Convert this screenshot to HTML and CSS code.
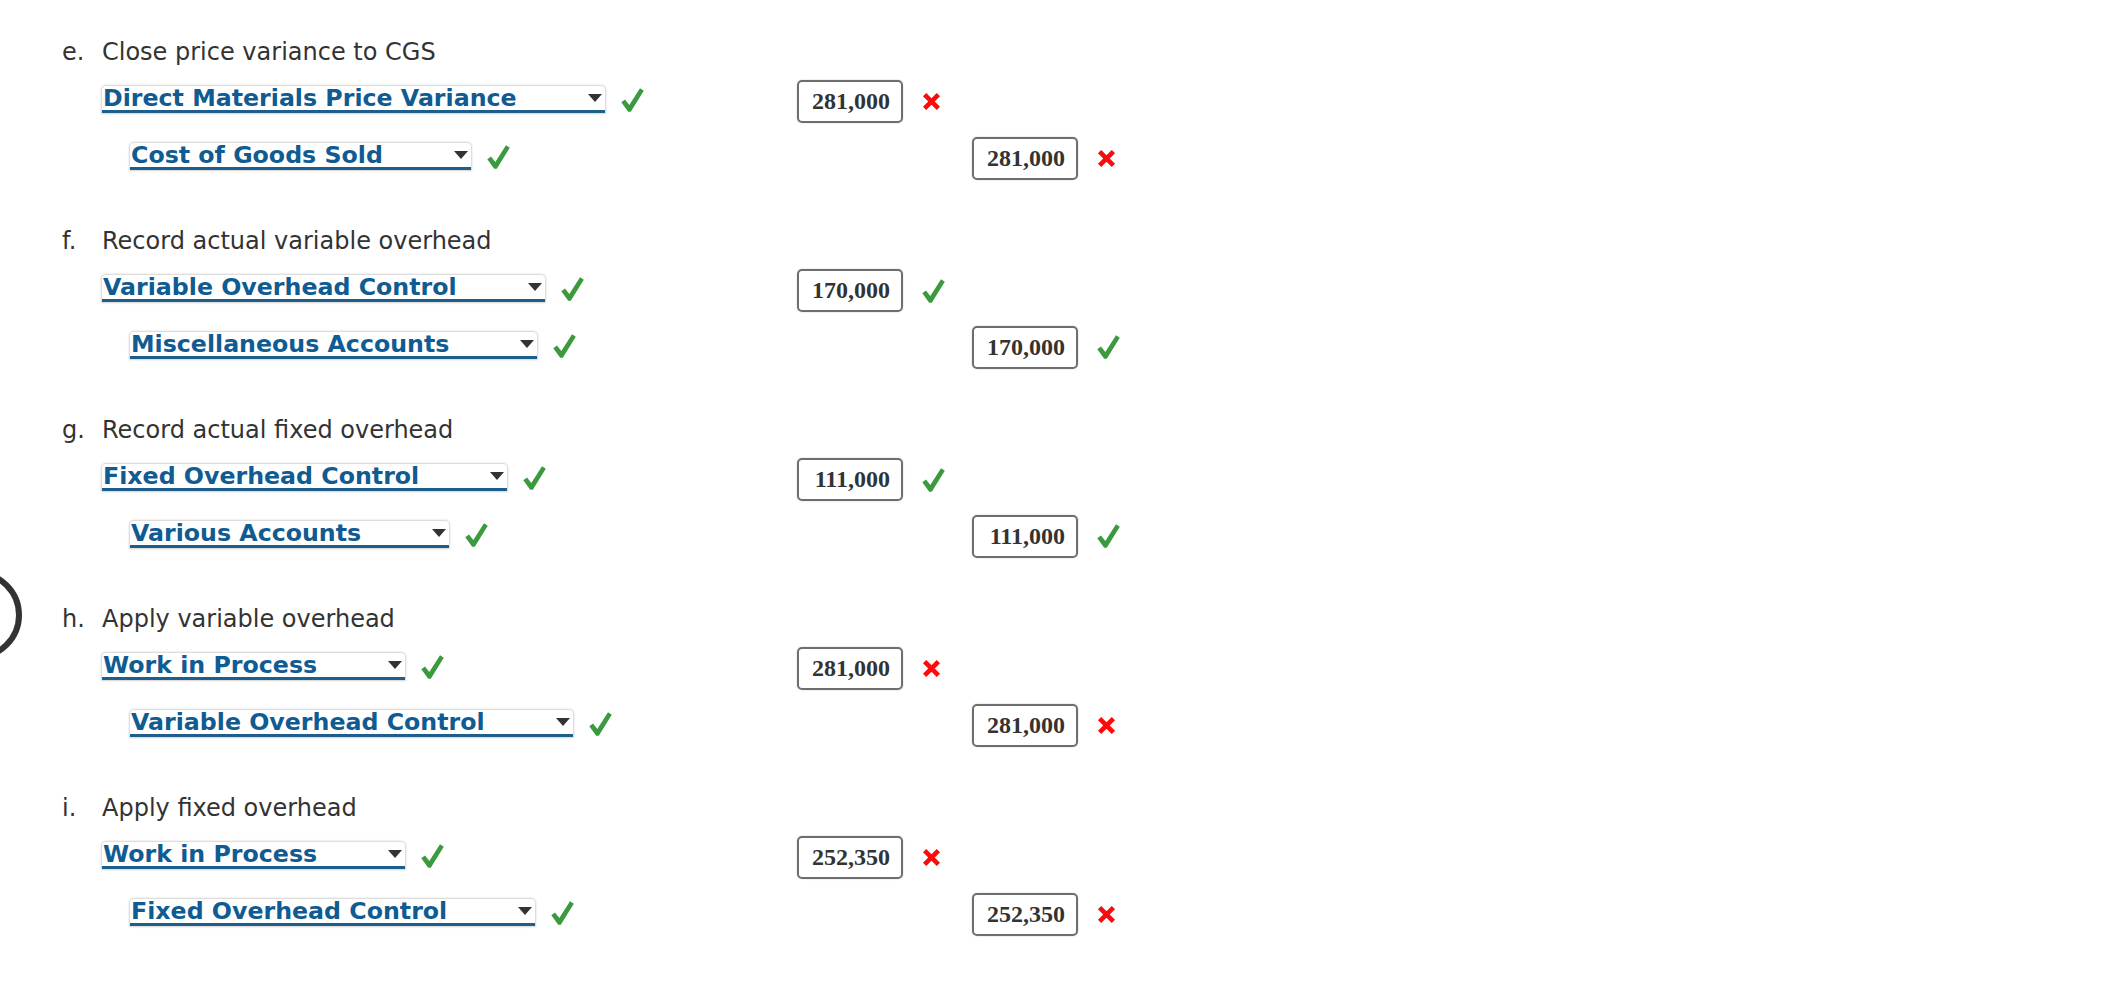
FILE: index.html
```html
<!DOCTYPE html>
<html lang="en">
<head>
<meta charset="utf-8">
<title>Journal entries</title>
<link rel="stylesheet" href="styles.css">
</head>
<body>
<svg class="defs" width="0" height="0" aria-hidden="true">
  <symbol id="ok" viewBox="0 0 23 24">
    <path d="M0.3 14.2 L4 11.4 L8.3 17 L19 0.2 L22.8 2.7 L9.8 23.8 L7.2 23.8 Z" fill="#3b9a3e"/>
  </symbol>
  <symbol id="bad" viewBox="0 0 19 17">
    <path d="M2.6 1.6 L16.4 15.4 M16.4 1.6 L2.6 15.4" stroke="#ff0a0a" stroke-width="4.6" fill="none"/>
  </symbol>
</svg>
<div class="ring"></div>
<main class="page">

  <section class="entry">
    <div class="label"><span class="marker">e.</span><span>Close price variance to CGS</span></div>
    <div class="lines">
      <div class="acct"><span class="select"><span class="opt">Direct Materials Price Variance</span><span class="arrow"></span></span><svg class="mark ok"><use href="#ok"/></svg></div>
      <div class="amt debit"><span class="num">281,000</span><svg class="mark bad"><use href="#bad"/></svg></div>
      <div class="acct credit-acct"><span class="select"><span class="opt">Cost of Goods Sold</span><span class="arrow"></span></span><svg class="mark ok"><use href="#ok"/></svg></div>
      <div class="amt credit"><span class="num">281,000</span><svg class="mark bad"><use href="#bad"/></svg></div>
    </div>
  </section>

  <section class="entry">
    <div class="label"><span class="marker">f.</span><span>Record actual variable overhead</span></div>
    <div class="lines">
      <div class="acct"><span class="select"><span class="opt">Variable Overhead Control</span><span class="arrow"></span></span><svg class="mark ok"><use href="#ok"/></svg></div>
      <div class="amt debit"><span class="num">170,000</span><svg class="mark ok"><use href="#ok"/></svg></div>
      <div class="acct credit-acct"><span class="select"><span class="opt">Miscellaneous Accounts</span><span class="arrow"></span></span><svg class="mark ok"><use href="#ok"/></svg></div>
      <div class="amt credit"><span class="num">170,000</span><svg class="mark ok"><use href="#ok"/></svg></div>
    </div>
  </section>

  <section class="entry">
    <div class="label"><span class="marker">g.</span><span>Record actual fixed overhead</span></div>
    <div class="lines">
      <div class="acct"><span class="select"><span class="opt">Fixed Overhead Control</span><span class="arrow"></span></span><svg class="mark ok"><use href="#ok"/></svg></div>
      <div class="amt debit"><span class="num">111,000</span><svg class="mark ok"><use href="#ok"/></svg></div>
      <div class="acct credit-acct"><span class="select"><span class="opt">Various Accounts</span><span class="arrow"></span></span><svg class="mark ok"><use href="#ok"/></svg></div>
      <div class="amt credit"><span class="num">111,000</span><svg class="mark ok"><use href="#ok"/></svg></div>
    </div>
  </section>

  <section class="entry">
    <div class="label"><span class="marker">h.</span><span>Apply variable overhead</span></div>
    <div class="lines">
      <div class="acct"><span class="select"><span class="opt">Work in Process</span><span class="arrow"></span></span><svg class="mark ok"><use href="#ok"/></svg></div>
      <div class="amt debit"><span class="num">281,000</span><svg class="mark bad"><use href="#bad"/></svg></div>
      <div class="acct credit-acct"><span class="select"><span class="opt">Variable Overhead Control</span><span class="arrow"></span></span><svg class="mark ok"><use href="#ok"/></svg></div>
      <div class="amt credit"><span class="num">281,000</span><svg class="mark bad"><use href="#bad"/></svg></div>
    </div>
  </section>

  <section class="entry">
    <div class="label"><span class="marker">i.</span><span>Apply fixed overhead</span></div>
    <div class="lines">
      <div class="acct"><span class="select"><span class="opt">Work in Process</span><span class="arrow"></span></span><svg class="mark ok"><use href="#ok"/></svg></div>
      <div class="amt debit"><span class="num">252,350</span><svg class="mark bad"><use href="#bad"/></svg></div>
      <div class="acct credit-acct"><span class="select"><span class="opt">Fixed Overhead Control</span><span class="arrow"></span></span><svg class="mark ok"><use href="#ok"/></svg></div>
      <div class="amt credit"><span class="num">252,350</span><svg class="mark bad"><use href="#bad"/></svg></div>
    </div>
  </section>

</main>
</body>
</html>
```
FILE: styles.css
```css
html, body {
  margin: 0;
  padding: 0;
  background: #ffffff;
}

body {
  font-family: "DejaVu Sans", Verdana, sans-serif;
  color: #333333;
  overflow: hidden;
  position: relative;
  min-height: 985px;
}

.defs {
  position: absolute;
  width: 0;
  height: 0;
}

.ring {
  position: absolute;
  left: -68px;
  top: 570px;
  width: 90px;
  height: 90px;
  box-sizing: border-box;
  border: 6px solid #333333;
  border-radius: 50%;
}

.page {
  padding: 37.5px 0 0 62px;
}

.entry {
  margin-bottom: 47px;
}

.label {
  display: flex;
  font-size: 24px;
  line-height: 28px;
  color: #333333;
}

.marker {
  width: 40px;
  flex: none;
}

.lines {
  display: grid;
  grid-template-columns: 695px 175px 1fr;
  grid-template-rows: 43px 43px;
  row-gap: 13.5px;
  margin: 14.5px 0 0 40px;
}

.acct {
  grid-column: 1;
  display: flex;
  align-items: center;
}

.credit-acct {
  grid-row: 2;
  padding-left: 28px;
}

.select {
  display: inline-flex;
  align-items: center;
  height: 24px;
  margin-bottom: 4px;
  background: #ffffff;
  border-bottom: 3px solid #1d5e8c;
  border-radius: 4px 4px 0 0;
  box-shadow: 0 0 2px 1px rgba(0, 0, 0, 0.18);
  padding: 0 3px 0 1px;
}

.opt {
  font-weight: bold;
  font-size: 23.7px;
  line-height: 24px;
  color: #0f5b92;
  white-space: nowrap;
}

.arrow {
  width: 0;
  height: 0;
  border-left: 7px solid transparent;
  border-right: 7px solid transparent;
  border-top: 8px solid #333333;
  margin-left: 71px;
}

.mark {
  flex: none;
}

.mark.ok {
  width: 23px;
  height: 24px;
  margin-left: 16px;
}

.acct .mark.ok {
  margin-bottom: 3px;
}

.amt {
  display: flex;
  align-items: center;
}

.amt .mark.ok {
  margin-left: 19px;
}

.mark.bad {
  width: 19px;
  height: 17px;
  margin-left: 19px;
}

.debit {
  grid-column: 2;
  grid-row: 1;
}

.credit {
  grid-column: 3;
  grid-row: 2;
}

.num {
  box-sizing: border-box;
  width: 106px;
  height: 43px;
  border: 2px solid #6e6e6e;
  border-radius: 5px;
  box-shadow: 0 0 2px rgba(0, 0, 0, 0.2);
  text-align: right;
  padding-right: 11px;
  font-family: "Liberation Serif", "Times New Roman", serif;
  font-weight: bold;
  font-size: 24px;
  line-height: 39px;
  color: #333333;
}
```
